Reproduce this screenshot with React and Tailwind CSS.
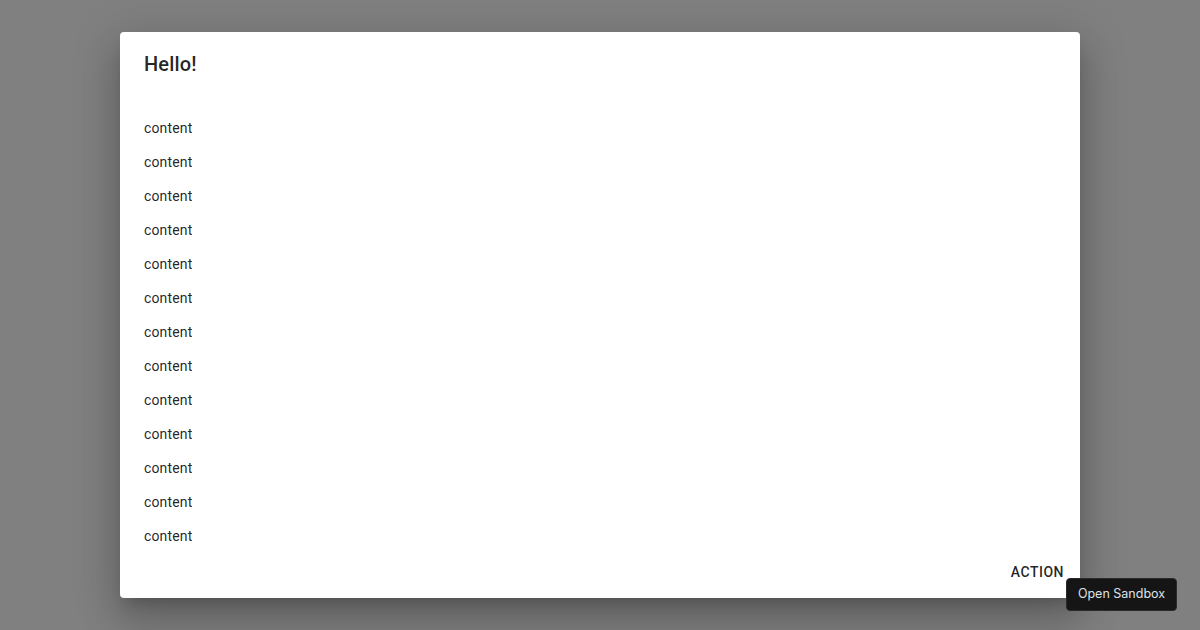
export default function App() {
  const lines = Array.from({ length: 13 });
  return (
    <div className="relative h-[630px] w-[1200px] overflow-hidden bg-[#808080] font-['Roboto',sans-serif]">
      <div className="absolute left-[120px] top-[32px] flex h-[566px] w-[960px] flex-col overflow-hidden rounded-[4px] bg-white shadow-[0px_11px_15px_-7px_rgba(0,0,0,0.2),0px_24px_38px_3px_rgba(0,0,0,0.14),0px_9px_46px_8px_rgba(0,0,0,0.12)]">
        <h2 className="px-6 py-4 text-[20px] font-medium leading-8 tracking-[0.15px] text-[rgba(0,0,0,0.87)]">
          Hello!
        </h2>
        <div className="flex min-h-0 flex-1 flex-col gap-[14px] overflow-hidden px-6 pt-[22px]">
          {lines.map((_, i) => (
            <p
              key={i}
              className="shrink-0 text-[14px] leading-5 tracking-[0.15px] text-[rgba(0,0,0,0.87)]"
            >
              content
            </p>
          ))}
        </div>
        <div className="flex h-[52.5px] shrink-0 items-center justify-end p-2">
          <button className="h-[36.5px] rounded-[4px] px-2 py-[6px] text-[14px] font-medium uppercase leading-[24.5px] tracking-[0.5px] text-[rgba(0,0,0,0.87)]">
            Action
          </button>
        </div>
      </div>
      <div className="absolute left-[1066px] top-[578px] flex h-[33px] w-[111px] items-center justify-center rounded-[4px] border border-[#2a2a2a] bg-[#151515] font-['Inter',sans-serif] text-[12.5px] text-[#dde3ea]">
        Open Sandbox
      </div>
    </div>
  );
}
